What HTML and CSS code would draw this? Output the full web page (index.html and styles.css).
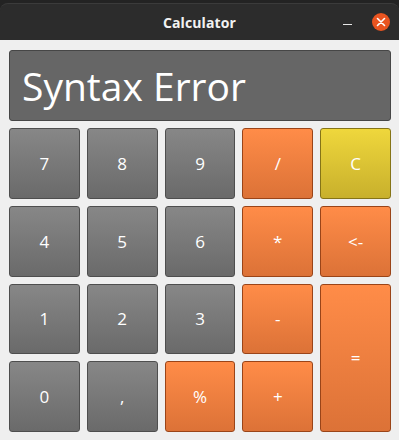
FILE: index.html
```html
<!DOCTYPE html>
<html>
<head>
<meta charset="utf-8">
<link rel="stylesheet" href="styles.css">
</head>
<body>
<div class="window">
  <div class="titlebar">
    <span class="title">Calculator</span>
    <div class="controls">
      <span class="minimize"></span>
      <span class="close">
        <svg width="18" height="18" viewBox="0 0 18 18"><path d="M5.5 5.5 L12.5 12.5 M12.5 5.5 L5.5 12.5" stroke="#fff" stroke-width="1.6" stroke-linecap="round"/></svg>
      </span>
    </div>
  </div>
  <div class="content">
    <div class="display">Syntax Error</div>
    <div class="keys">
      <button class="key gray">7</button>
      <button class="key gray">8</button>
      <button class="key gray">9</button>
      <button class="key orange">/</button>
      <button class="key yellow">C</button>
      <button class="key gray">4</button>
      <button class="key gray">5</button>
      <button class="key gray">6</button>
      <button class="key orange">*</button>
      <button class="key orange">&lt;-</button>
      <button class="key gray">1</button>
      <button class="key gray">2</button>
      <button class="key gray">3</button>
      <button class="key orange">-</button>
      <button class="key orange equals">=</button>
      <button class="key gray">0</button>
      <button class="key gray">,</button>
      <button class="key orange">%</button>
      <button class="key orange">+</button>
    </div>
  </div>
</div>
</body>
</html>
```
FILE: styles.css
```css
html, body {
  margin: 0;
  padding: 0;
  background: #232323;
  font-family: "Open Sans", "Noto Sans", "DejaVu Sans", sans-serif;
}
.window {
  width: 399px;
  height: 440px;
  display: flex;
  flex-direction: column;
  padding-top: 3px;
  box-sizing: border-box;
}
.titlebar {
  height: 37px;
  background: #2c2c2c;
  border-top: 1px solid #3b3b3b;
  border-radius: 8px 8px 0 0;
  box-sizing: border-box;
  display: flex;
  align-items: center;
  justify-content: center;
  position: relative;
}
.title {
  color: #f2f2f2;
  font-weight: bold;
  font-size: 14px;
  letter-spacing: 0.1px;
}
.controls {
  position: absolute;
  right: 9px;
  top: 9px;
  display: flex;
  align-items: center;
  gap: 20px;
}
.minimize {
  width: 9px;
  height: 1px;
  background: #e8e8e8;
  margin-top: 4px;
}
.close {
  width: 18px;
  height: 18px;
  border-radius: 50%;
  background: #e95420;
  display: flex;
}
.content {
  flex: 1;
  background: #efefef;
  padding: 10px 8px 8px 9px;
  display: flex;
  flex-direction: column;
  gap: 7px;
}
.display {
  height: 71px;
  box-sizing: border-box;
  background: #666666;
  border: 1px solid #464646;
  border-radius: 3px;
  color: #ffffff;
  font-size: 39px;
  padding-left: 12px;
  display: flex;
  align-items: center;
  padding-bottom: 1px;
}
.keys {
  flex: 1;
  display: grid;
  grid-template-columns: repeat(5, 1fr);
  grid-template-rows: repeat(4, 1fr);
  gap: 7px;
}
.key {
  font-family: inherit;
  font-size: 17px;
  color: #ffffff;
  border-radius: 3px;
  border: 1px solid #505050;
  padding: 0;
  margin: 0;
}
.gray {
  background: linear-gradient(#878787, #6a6a6a);
  border-color: #4e4e4e;
}
.orange {
  background: linear-gradient(#ff8c48, #dc7237);
  border-color: #9a4418;
}
.yellow {
  background: linear-gradient(#efd73c, #c8b02c);
  border-color: #857417;
}
.equals {
  grid-column: 5;
  grid-row: 3 / span 2;
}
```
